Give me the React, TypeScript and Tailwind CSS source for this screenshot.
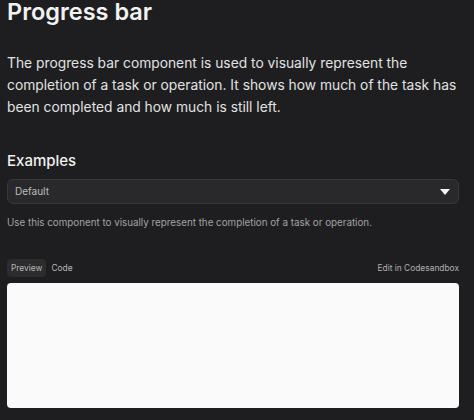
import React from "react";

export default function App() {
  return (
    <div
      className="min-h-[420px] w-full bg-[#1e1e20] pl-[7px] pt-0 text-[#ececec]"
      style={{ fontFamily: "Inter, 'Noto Sans', sans-serif" }}
    >
      <div className="w-[452px]">
        <h1 className="text-[23.5px] font-semibold leading-[24px] text-[#f2f2f2]">
          Progress bar
        </h1>
        <p className="mt-[28px] text-[13.8px] leading-[22px] text-[#e2e2e2]">
          The progress bar component is used to visually represent the
          completion of a task or operation. It shows how much of the task has
          been completed and how much is still left.
        </p>
        <h2 className="mt-[33px] text-[15px] font-medium leading-[20px] text-[#f0f0f0]">
          Examples
        </h2>
        <div className="mt-[8px] flex h-[25px] items-center justify-between rounded-[6px] border border-[#38383b] bg-[#29292b] pl-[7px] pr-[8px]">
          <span className="text-[10px] text-[#bdbdbd]">Default</span>
          <svg width="10" height="6" viewBox="0 0 10 6">
            <path d="M0 0 L10 0 L5 6 Z" fill="#f5f5f5" />
          </svg>
        </div>
        <p className="mt-[12px] text-[9.8px] leading-[14px] text-[#a3a3a3]">
          Use this component to visually represent the completion of a task or
          operation.
        </p>
        <div className="mt-[29px] flex items-center justify-between">
          <div className="flex items-center gap-[5px]">
            <span className="flex h-[18px] items-center rounded-[4px] bg-[#2c2c2e] px-[4px] text-[8.4px] text-[#b8b8b8]">
              Preview
            </span>
            <span className="text-[8.4px] text-[#b8b8b8]">Code</span>
          </div>
          <span className="text-[8.4px] text-[#b0b0b0]">Edit in Codesandbox</span>
        </div>
        <div className="mt-[6px] h-[125px] w-full rounded-[4px] bg-[#fafafa]" />
      </div>
    </div>
  );
}
